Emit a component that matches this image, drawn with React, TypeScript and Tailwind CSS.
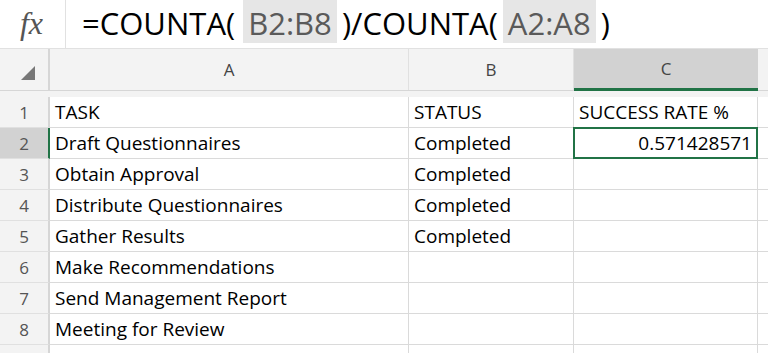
import React from 'react'

const rows = [
  { a: 'TASK', b: 'STATUS', c: 'SUCCESS RATE %' },
  { a: 'Draft Questionnaires', b: 'Completed', c: '0.571428571' },
  { a: 'Obtain Approval', b: 'Completed', c: '' },
  { a: 'Distribute Questionnaires', b: 'Completed', c: '' },
  { a: 'Gather Results', b: 'Completed', c: '' },
  { a: 'Make Recommendations', b: '', c: '' },
  { a: 'Send Management Report', b: '', c: '' },
  { a: 'Meeting for Review', b: '', c: '' },
  { a: '', b: '', c: '' },
]

const font = { fontFamily: '"Open Sans", "Noto Sans", Arial, sans-serif' }

function Range({ children }: { children: React.ReactNode }) {
  return <span className="bg-[#e6e6e6] text-[#5a5a5a] px-[5px] h-[43px] pt-[8px]">{children}</span>
}

export default function App() {
  return (
    <div className="w-[768px] h-[353px] bg-white overflow-hidden" style={font}>
      {/* formula bar */}
      <div className="flex h-[49px] border-b border-[#e1e1e1]">
        <div className="w-[66px] border-r border-[#e1e1e1] flex items-center justify-center pr-[2px] pb-[3px]">
          <span className="italic text-[32px] text-[#555]" style={{ fontFamily: '"Liberation Serif", serif' }}>fx</span>
        </div>
        <div className="flex items-start text-[31px] text-black pl-[16px] leading-none whitespace-pre">
          <span className="h-[43px] pt-[8px]">=COUNTA( </span>
          <Range>B2:B8</Range>
          <span className="h-[43px] pt-[8px] [word-spacing:-3px]"> )/COUNTA( </span>
          <Range>A2:A8</Range>
          <span className="h-[43px] pt-[8px] [word-spacing:-3px]"> )</span>
        </div>
      </div>

      {/* column header */}
      <div className="grid grid-cols-[50px_359px_165px_184px_1fr] h-[42px] bg-[#f3f3f3] border-b border-[#d6d6d6] text-[17px] text-[#444]">
        <div className="border-r-2 border-[#d6d6d6] flex items-end justify-end pr-[13px] pb-[10px]">
          <svg width="14" height="14" viewBox="0 0 14 14">
            <polygon points="14,0 14,14 0,14" fill="#777" />
          </svg>
        </div>
        <div className="border-r border-[#e0e0e0] flex items-center justify-center">A</div>
        <div className="border-r border-[#e0e0e0] flex items-center justify-center">B</div>
        <div className="bg-[#d2d2d2] border-b-[3px] border-[#217346] flex items-center justify-center -mb-px">C</div>
        <div />
      </div>

      {/* strip between header and rows */}
      <div className="h-[6px] bg-[#f3f3f3]" />

      {/* rows */}
      {rows.map((r, i) => {
        const n = i + 1
        const sel = n === 2
        return (
          <div key={i} className="grid grid-cols-[50px_359px_165px_184px_1fr] h-[31px] text-[19px] leading-none text-black">
            <div
              className={`flex items-end justify-center pb-[6px] text-[17px] text-[#555] border-b border-[#e0e0e0] ${sel ? 'bg-[#d2d2d2] border-r-2 border-r-[#217346]' : 'bg-[#f3f3f3] border-r-2 border-r-[#d6d6d6]'}`}
            >
              {n < 9 ? n : ''}
            </div>
            <div className="border-r border-b border-[#dadada] flex items-end pl-[5px] pb-[5px] whitespace-nowrap">{r.a}</div>
            <div className="border-r border-b border-[#dadada] flex items-end pl-[5px] pb-[5px] whitespace-nowrap">{r.b}</div>
            <div
              className={`flex items-end whitespace-nowrap ${sel ? 'border-2 border-[#217346] justify-end pr-[4px] pb-[4px] -mt-px -ml-px' : 'border-r border-b border-[#dadada] pl-[5px] pb-[5px]'}`}
            >
              {r.c}
            </div>
            <div className="border-b border-[#dadada]" />
          </div>
        )
      })}
    </div>
  )
}
